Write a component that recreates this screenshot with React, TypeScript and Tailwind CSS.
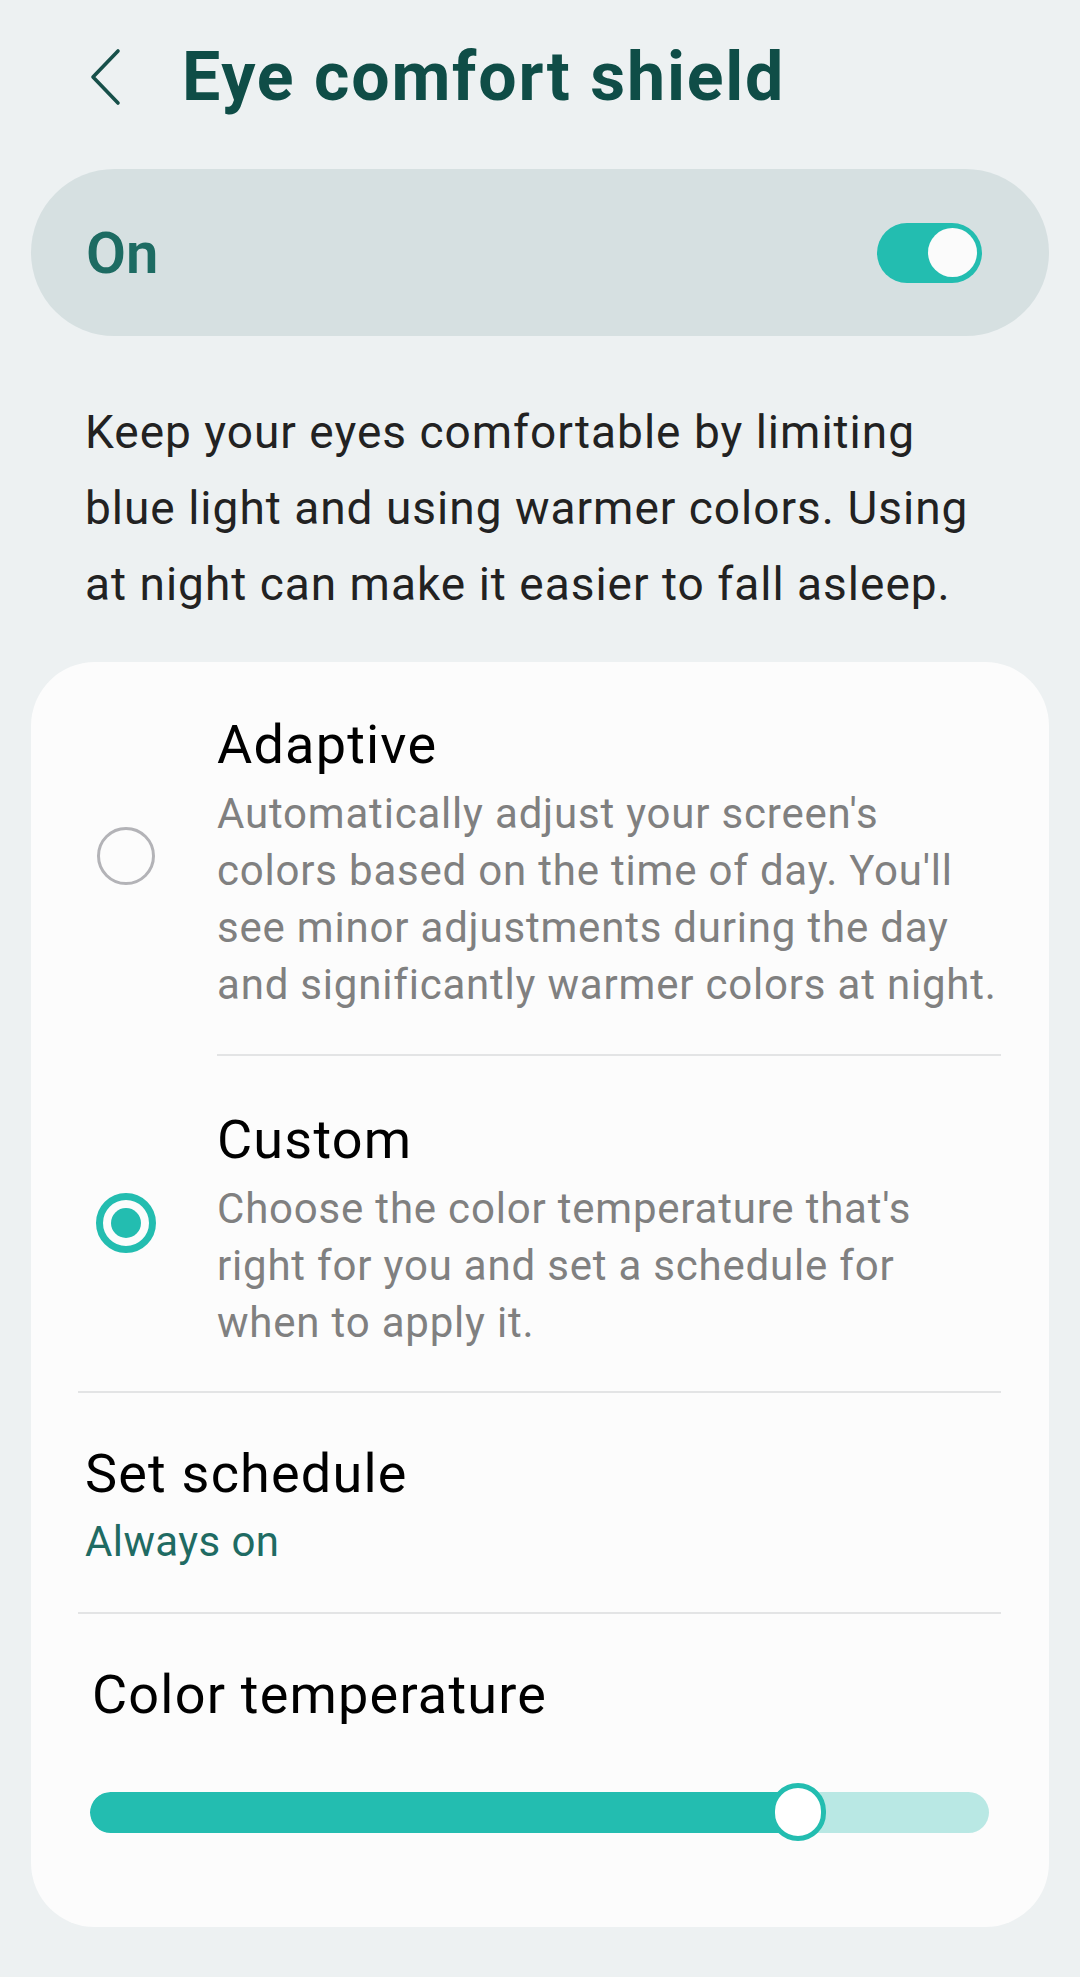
import React from "react";

function Radio({ checked }: { checked: boolean }) {
  if (checked) {
    return (
      <div className="w-[60px] h-[60px] rounded-full border-[7px] border-[#23bdb0] flex items-center justify-center shrink-0">
        <div className="w-[30px] h-[30px] rounded-full bg-[#23bdb0]" />
      </div>
    );
  }
  return <div className="w-[58px] h-[58px] rounded-full border-[3.5px] border-[#b3b3b7] shrink-0" />;
}

export default function App() {
  const pct = 78.7;
  return (
    <div
      className="w-full min-h-[1977px] bg-[#edf1f2] text-[#1f1f1f]"
      style={{ fontFamily: "Roboto, 'Noto Sans', sans-serif" }}
    >
      {/* Header */}
      <div className="flex items-center pt-[43px] pl-[88px]">
        <svg width="34" height="58" viewBox="0 0 34 58" className="shrink-0">
          <path d="M30 3 L5 29 L30 55" fill="none" stroke="#17504a" strokeWidth="3.6" strokeLinecap="round" strokeLinejoin="round" />
        </svg>
        <h1 className="ml-[60px] text-[68px] leading-[68px] font-bold text-[#0f4d47] tracking-[1.8px]">
          Eye comfort shield
        </h1>
      </div>

      {/* On pill */}
      <div className="mx-[31px] mt-[58px] h-[167px] rounded-full bg-[#d6e0e1] flex items-center justify-between pl-[55px] pr-[67px]">
        <span className="text-[58px] font-semibold text-[#1d6b62] leading-none">On</span>
        <div className="w-[105px] h-[60px] rounded-full bg-[#23bdb0] flex items-center justify-end pr-[5px]">
          <div className="w-[49px] h-[49px] rounded-full bg-[#fbfbfb]" />
        </div>
      </div>

      {/* Description */}
      <p className="mt-[58px] px-[85px] text-[46px] leading-[76px] tracking-[1px] text-[#222222] whitespace-nowrap">
        Keep your eyes comfortable by limiting
        <br />
        blue light and using warmer colors. Using
        <br />
        at night can make it easier to fall asleep.
      </p>

      {/* Card */}
      <div className="mx-[31px] mt-[40px] rounded-[64px] bg-[#fcfcfc] pl-[47px] pr-[48px] pt-[53px] pb-[85px]">
        {/* Adaptive */}
        <div className="flex items-center">
          <div className="w-[139px] pl-[19px] mb-[16px]">
            <Radio checked={false} />
          </div>
          <div className="flex-1">
            <div className="text-[54px] leading-[60px] tracking-[1.2px] text-black">Adaptive</div>
            <div className="mt-[10px] text-[42px] leading-[57px] tracking-[0.8px] text-[#808080] whitespace-nowrap">
              Automatically adjust your screen's
              <br />
              colors based on the time of day. You'll
              <br />
              see minor adjustments during the day
              <br />
              and significantly warmer colors at night.
            </div>
          </div>
        </div>
        <div className="ml-[139px] mt-[41px] h-[2px] bg-[#e3e4e5]" />

        {/* Custom */}
        <div className="flex items-center mt-[54px]">
          <div className="w-[139px] pl-[18px] mb-[16px]">
            <Radio checked={true} />
          </div>
          <div className="flex-1">
            <div className="text-[54px] leading-[60px] tracking-[1.2px] text-black">Custom</div>
            <div className="mt-[10px] text-[42px] leading-[57px] tracking-[0.8px] text-[#808080] whitespace-nowrap">
              Choose the color temperature that's
              <br />
              right for you and set a schedule for
              <br />
              when to apply it.
            </div>
          </div>
        </div>
        <div className="mt-[40px] h-[2px] bg-[#e3e4e5]" />

        {/* Set schedule */}
        <div className="pl-[7px] mt-[51px]">
          <div className="text-[54px] leading-[60px] tracking-[1.2px] text-black">Set schedule</div>
          <div className="mt-[13px] text-[42px] leading-[50px] tracking-[0.4px] text-[#1f6b63]">Always on</div>
        </div>
        <div className="mt-[45px] h-[2px] bg-[#e3e4e5]" />

        {/* Color temperature */}
        <div className="pl-[14px] mt-[51px]">
          <div className="text-[54px] leading-[60px] tracking-[1.2px] text-black">Color temperature</div>
        </div>
        <div className="mt-[57px] px-[12px]">
          <div className="relative h-[60px] flex items-center">
            <div className="w-full h-[41px] rounded-full bg-[#b9e8e4] overflow-hidden">
              <div className="h-full bg-[#23bdb0] rounded-l-full" style={{ width: `${pct}%` }} />
            </div>
            <div
              className="absolute top-[1px] w-[56px] h-[58px] -ml-[28px] rounded-full bg-white border-[5px] border-[#23bdb0]"
              style={{ left: `${pct}%` }}
            />
          </div>
        </div>
      </div>
    </div>
  );
}
